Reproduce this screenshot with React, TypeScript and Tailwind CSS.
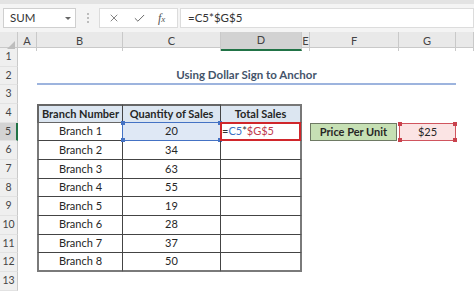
import { X, Check } from 'lucide-react'

const cols = 'grid grid-cols-[18px_19px_86px_98px_81px_8px_89px_57px_1fr]'
const font = { fontFamily: 'Lato, "Open Sans", sans-serif' }

const branches = [
  ['Branch 1', '20'],
  ['Branch 2', '34'],
  ['Branch 3', '63'],
  ['Branch 4', '55'],
  ['Branch 5', '19'],
  ['Branch 6', '28'],
  ['Branch 7', '37'],
  ['Branch 8', '50'],
]

function Handle({ pos, color }: { pos: string; color: string }) {
  return <span className={`absolute w-[4px] h-[4px] ${pos} ${color}`} />
}

function RowHead({ n, active }: { n: number; active?: boolean }) {
  return (
    <div
      className={
        'flex items-center justify-center text-[10.5px] text-[#444] border-b border-[#e2e2e2] ' +
        (active ? 'bg-[#d3d3d3] border-r-2 border-r-[#217346]' : 'bg-[#efefef] border-r border-r-[#c9c9c9]')
      }
    >
      {n}
    </div>
  )
}

export default function App() {
  const letters = ['A', 'B', 'C', 'D', 'E', 'F', 'G', '']
  return (
    <div className="w-[474px] h-[291px] overflow-hidden bg-white" style={font}>
      {/* formula bar */}
      <div className="h-[32px] bg-[#f4f4f4] border-t-[4px] border-[#e3e3e3] flex items-center text-[11.5px] text-[#333]">
        <div className="ml-[3px] w-[73px] h-[20px] bg-white border border-[#cfcfcf] flex items-center justify-between pl-[6px] pr-[4px]">
          <span>SUM</span>
          <span className="w-0 h-0 border-l-[3px] border-r-[3px] border-t-[3px] border-l-transparent border-r-transparent border-t-[#666]" />
        </div>
        <div className="w-[23px] flex flex-col items-center gap-[2px]">
          <span className="w-[2px] h-[2px] bg-[#bdbdbd]" />
          <span className="w-[2px] h-[2px] bg-[#bdbdbd]" />
          <span className="w-[2px] h-[2px] bg-[#bdbdbd]" />
        </div>
        <div className="w-[79px] h-[20px] bg-white border border-[#dcdcdc] flex items-center text-[#666]">
          <X size={12} strokeWidth={1.6} className="ml-[8px]" />
          <Check size={13} strokeWidth={1.8} className="ml-[13px]" />
          <span className="ml-[12px] italic text-[12px] text-[#555]" style={{ fontFamily: '"Liberation Serif", serif' }}>
            f<span className="text-[9px]">x</span>
          </span>
        </div>
        <div className="ml-[2px] flex-1 h-[20px] bg-white border border-[#dcdcdc] flex items-center pl-[7px]">
          <span>=C5*$G$5</span>
        </div>
      </div>

      {/* column headers */}
      <div className={`${cols} h-[16px] bg-[#e9e9e9] text-[11px] text-[#444] border-b border-[#c9c9c9]`}>
        <div className="relative border-r border-[#c9c9c9]">
          <span className="absolute right-[2px] bottom-[2px] w-0 h-0" style={{ borderBottom: '8px solid #bdbdbd', borderLeft: '8px solid transparent' }} />
        </div>
        {letters.map((l, i) => (
          <div
            key={i}
            className={
              'flex items-center justify-center border-r border-[#c9c9c9] ' +
              (l === 'D' ? 'bg-[#d2d2d2] border-b-2 border-b-[#217346]' : '')
            }
          >
            {l}
          </div>
        ))}
      </div>

      {/* sheet */}
      <div className={`${cols} auto-rows-[18.67px] text-[11px] text-[#262626] whitespace-nowrap`}>
        {/* row 1 */}
        <RowHead n={1} />
        <div className="col-span-8" />

        {/* row 2 */}
        <RowHead n={2} />
        <div />
        <div className="col-span-6 flex items-center justify-center font-bold text-[11.5px] text-[#44546a] border-b-2 border-[#9db4de]">
          Using Dollar Sign to Anchor
        </div>
        <div />

        {/* row 3 */}
        <RowHead n={3} />
        <div className="col-span-8" />

        {/* row 4 */}
        <RowHead n={4} />
        <div />
        <div className="flex items-center justify-center font-bold bg-[#dce6f1] border-2 border-r border-b border-[#666] border-r-[#444]">
          Branch Number
        </div>
        <div className="flex items-center justify-center font-bold bg-[#dce6f1] border-t-2 border-r border-b border-[#666] border-r-[#444]">
          Quantity of Sales
        </div>
        <div className="flex items-center justify-center font-bold bg-[#dce6f1] border-t-2 border-r-2 border-b border-[#777] border-b-[#444]">
          Total Sales
        </div>
        <div className="col-span-4" />

        {branches.map(([b, q], i) => {
          const row = i + 5
          const last = i === branches.length - 1
          const bb = last ? 'border-b-2 border-b-[#7a7a7a]' : 'border-b border-b-[#444]'
          return [
            <RowHead key={`h${row}`} n={row} active={row === 5} />,
            <div key={`a${row}`} />,
            <div key={`b${row}`} className={`flex items-center justify-center border-l-2 border-l-[#7a7a7a] border-r border-r-[#444] ${bb}`}>
              {b}
            </div>,
            <div
              key={`c${row}`}
              className={`relative flex items-center justify-center border-r border-r-[#444] ${bb} ${row === 5 ? 'bg-[#dfe8f5]' : ''}`}
            >
              {q}
              {row === 5 && (
                <>
                  <span className="absolute inset-[-1px] border border-[#4472c4]" />
                  <Handle pos="-left-[2px] -top-[2px]" color="bg-[#4472c4]" />
                  <Handle pos="-right-[2px] -top-[2px]" color="bg-[#4472c4]" />
                  <Handle pos="-left-[2px] -bottom-[2px]" color="bg-[#4472c4]" />
                  <Handle pos="-right-[2px] -bottom-[2px]" color="bg-[#4472c4]" />
                </>
              )}
            </div>,
            <div key={`d${row}`} className={`relative flex items-center border-r-2 border-r-[#7a7a7a] ${bb}`}>
              {row === 5 && (
                <>
                  <span className="pl-[1px]">
                    <span className="text-[#333]">=</span>
                    <span className="text-[#3c6fc4]">C5</span>
                    <span className="text-[#333]">*</span>
                    <span className="text-[#c0394b]">$G$5</span>
                  </span>
                  <span className="absolute -inset-x-[1px] -top-[1px] -bottom-[1px] border-2 border-[#d0262b]" />
                </>
              )}
            </div>,
            <div key={`e${row}`} />,
            row === 5 ? (
              <div key={`f${row}`} className="flex items-center justify-center font-bold bg-[#c6e0b4] border border-[#6e7a64] mr-[2px]">
                Price Per Unit
              </div>
            ) : (
              <div key={`f${row}`} />
            ),
            row === 5 ? (
              <div key={`g${row}`} className="relative flex items-center justify-center bg-[#fbe4e4] border border-[#d0555e]">
                $25
                <Handle pos="-left-[2px] -top-[2px]" color="bg-[#c9424d]" />
                <Handle pos="-right-[2px] -top-[2px]" color="bg-[#c9424d]" />
                <Handle pos="-left-[2px] -bottom-[2px]" color="bg-[#c9424d]" />
                <Handle pos="-right-[2px] -bottom-[2px]" color="bg-[#c9424d]" />
              </div>
            ) : (
              <div key={`g${row}`} />
            ),
            <div key={`x${row}`} />,
          ]
        })}

        <RowHead n={13} />
        <div className="col-span-8" />
      </div>
    </div>
  )
}
